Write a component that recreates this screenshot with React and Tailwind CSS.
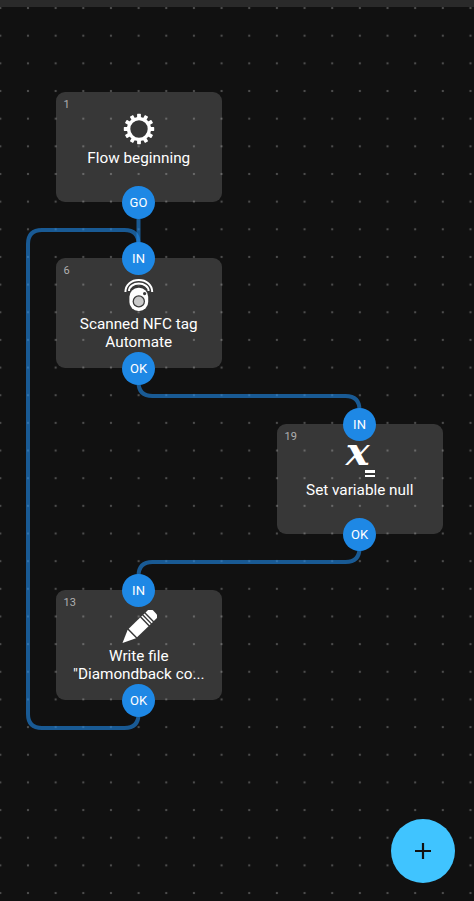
const TEETH = [0, 30, 60, 90, 120, 150, 180, 210, 240, 270, 300, 330];

function GearIcon() {
  return (
    <svg width="32" height="32" viewBox="0 0 32 32" fill="none">
      <circle cx="16" cy="16" r="10.4" stroke="white" strokeWidth="3.4" />
      {TEETH.map((a) => (
        <rect key={a} x="14.1" y="0.8" width="3.8" height="5" rx="0.6" fill="white" transform={`rotate(${a} 16 16)`} />
      ))}
    </svg>
  );
}

function NfcIcon() {
  return (
    <svg width="32" height="32" viewBox="0 0 32 32" fill="none">
      <path d="M2.4 13C2.4 5.4 8.6 1 15.8 1S29.2 5.4 29.2 13" stroke="white" strokeWidth="2" />
      <path d="M6 12C6 7.4 10.6 4.6 15.8 4.6S25.6 7.4 25.6 12" stroke="white" strokeWidth="2" />
      <rect x="6.4" y="8.8" width="18.8" height="23.2" rx="9" fill="white" />
      <circle cx="15.8" cy="22.4" r="6.2" fill="#3a3a3a" />
      <circle cx="15.8" cy="22.4" r="4.9" fill="#c9c9c9" />
      <circle cx="21.6" cy="14.6" r="1.6" fill="#3a3a3a" />
    </svg>
  );
}

function PencilIcon() {
  return (
    <svg width="36" height="34" viewBox="0 0 36 34" fill="white">
      <g transform="translate(1.5 33) rotate(-44)">
        <path d="M0 0L13 -6V6Z" />
        <rect x="14.4" y="-6" width="16" height="12" />
        <rect x="31.8" y="-6" width="1.6" height="12" />
        <rect x="34.8" y="-6" width="1.6" height="12" />
        <path d="M37.8 -6H41C43.4 -6 44.6 -4 44.6 -2V2C44.6 4 43.4 6 41 6H37.8Z" />
      </g>
    </svg>
  );
}

function VariableIcon() {
  return (
    <div className="relative h-8 w-8">
      <span className="absolute left-[2px] top-[-4px] font-['DejaVu_Serif',serif] text-[40px] font-bold italic leading-[20px] text-white">
        x
      </span>
      <div className="absolute left-[21px] top-[25px] flex flex-col gap-[2px]">
        <div className="h-[2.5px] w-[10.5px] bg-white" />
        <div className="h-[2.5px] w-[10.5px] bg-white" />
      </div>
    </div>
  );
}

const NODES = [
  { id: 1, left: 'left-[56px]', top: 'top-[92px]', icon: <GearIcon />, lines: ['Flow beginning'] },
  { id: 6, left: 'left-[56px]', top: 'top-[258px]', icon: <NfcIcon />, lines: ['Scanned NFC tag', 'Automate'] },
  { id: 19, left: 'left-[277px]', top: 'top-[424px]', icon: <VariableIcon />, lines: ['Set variable null'] },
  { id: 13, left: 'left-[56px]', top: 'top-[590px]', icon: <PencilIcon />, lines: ['Write file', '"Diamondback co...'] },
];

const PORTS = [
  { label: 'GO', pos: 'left-[122px] top-[186px]' },
  { label: 'IN', pos: 'left-[122px] top-[242px]' },
  { label: 'OK', pos: 'left-[122px] top-[352px]' },
  { label: 'IN', pos: 'left-[343px] top-[408px]' },
  { label: 'OK', pos: 'left-[343px] top-[518px]' },
  { label: 'IN', pos: 'left-[122px] top-[574px]' },
  { label: 'OK', pos: 'left-[122px] top-[684px]' },
];

const WIRES = [
  'M138.5 202V258',
  'M138.5 368V382Q138.5 396 152.5 396H345.5Q359.5 396 359.5 410V424',
  'M359.5 534V548Q359.5 562 345.5 562H152.5Q138.5 562 138.5 576V590',
  'M138.5 700V714Q138.5 728 124.5 728H42Q28 728 28 714V244Q28 230 42 230H124.5Q138.5 230 138.5 244V258',
];

export default function App() {
  return (
    <div className="relative h-[901px] w-[474px] overflow-hidden bg-[#111111] font-['Roboto',sans-serif]">
      {/* grid de puntos */}
      <div className="absolute inset-0 bg-[radial-gradient(circle,#4c4c4c_0.9px,transparent_1.6px)] bg-[size:27.67px_27.67px] bg-[position:-13.5px_-5.8px]" />
      <div className="absolute left-0 right-0 top-0 h-[7px] bg-[#2a2a2a]" />

      {NODES.map((n) => (
        <div
          key={n.id}
          className={`absolute ${n.left} ${n.top} flex h-[110px] w-[165.5px] flex-col items-center rounded-[9px] bg-white/[0.16] pt-[21px]`}
        >
          <span className="absolute left-[7.5px] top-[6px] text-[11px] leading-[13px] text-[#b0b0b0]">{n.id}</span>
          <div className="flex h-8 items-center justify-center">{n.icon}</div>
          <div className="mt-[4px] text-center text-[15.3px] leading-[18px] text-white">
            {n.lines.map((l) => (
              <div key={l}>{l}</div>
            ))}
          </div>
        </div>
      ))}

      <svg className="absolute inset-0" width="474" height="901" fill="none">
        {WIRES.map((d) => (
          <path key={d} d={d} stroke="#1e88e5" strokeOpacity="0.62" strokeWidth="4" />
        ))}
      </svg>

      {PORTS.map((p, i) => (
        <div
          key={i}
          className={`absolute ${p.pos} flex h-[33px] w-[33px] items-center justify-center rounded-full bg-[#1e88e5] text-[13px] leading-[16px] text-white`}
        >
          {p.label}
        </div>
      ))}

      <button className="absolute left-[391px] top-[819px] flex h-16 w-16 items-center justify-center rounded-full bg-[#40c4ff]">
        <svg width="20" height="20" viewBox="0 0 20 20" stroke="#111111" strokeWidth="2.2">
          <path d="M10 2V18M2 10H18" />
        </svg>
      </button>
    </div>
  );
}
